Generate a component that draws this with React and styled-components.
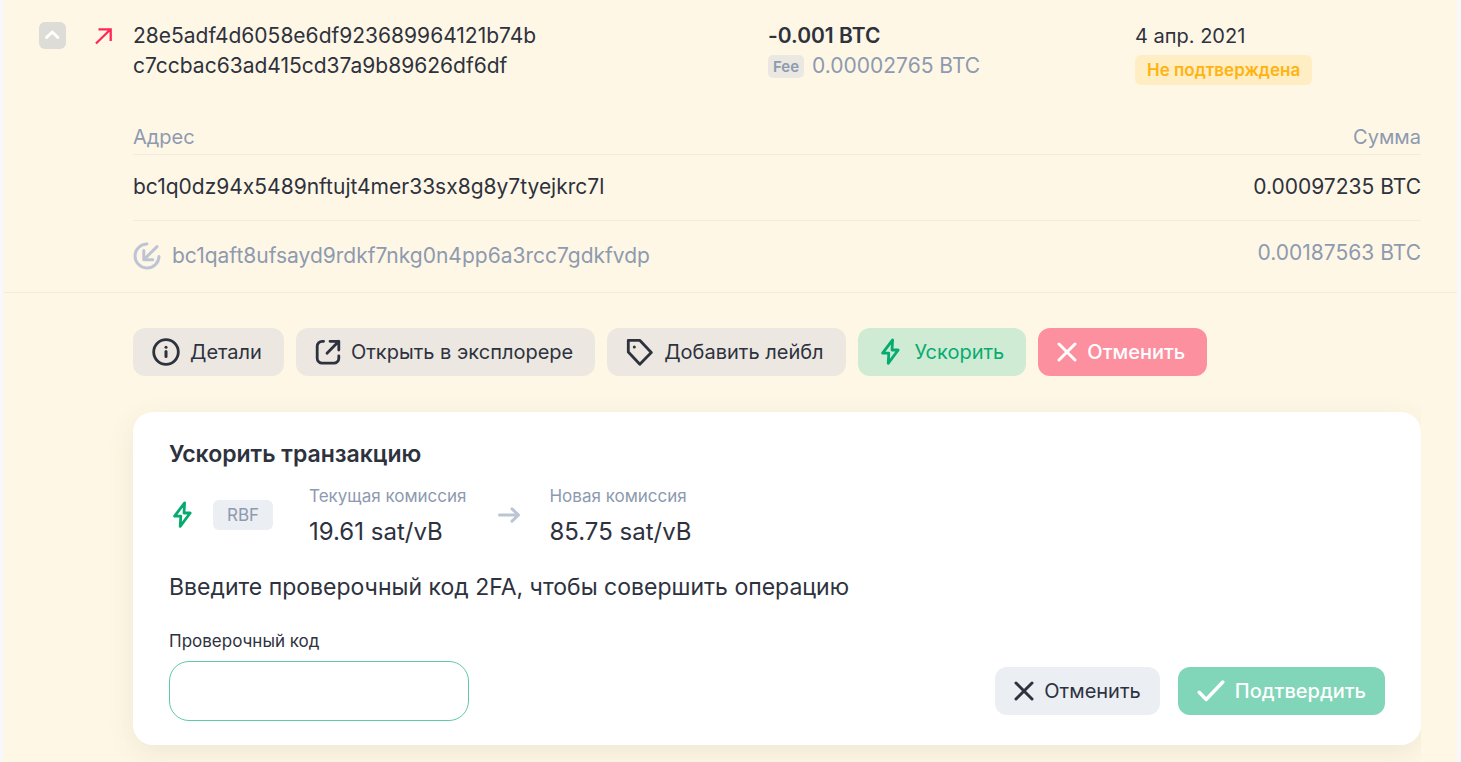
import React, { useState } from "react";
import styled, { createGlobalStyle, ThemeProvider } from "styled-components";

const theme = {
  colors: {
    page: "#f7f8fb",
    pending: "#fff7e5",
    text: "#2d323e",
    muted: "#8d9ab0",
    line: "#f1ece1",
    green: "#06ab71",
    red: "#ff2755",
    orange: "#ffb310",
  },
};

export default function App() {
  return (
    <ThemeProvider theme={theme}>
      <GlobalStyle />
      <Transaction>
        <TransactionInfo />
        <TransactionActions />
      </Transaction>
    </ThemeProvider>
  );
}

const TransactionInfo = () => {
  return (
    <Info>
      <Toggle type="button" aria-label="Свернуть">
        <svg width="27" height="27" viewBox="0 0 27 27">
          <path d="M7.5 15.5 13.2 10l5.7 5.5" />
        </svg>
      </Toggle>
      <Direction width="18" height="18" viewBox="0 0 18 18">
        <path d="M1 16.5 14.8 3M3.5 2.4h12.2V14" />
      </Direction>
      <Hash>
        28e5adf4d6058e6df923689964121b74b
        <br />
        c7ccbac63ad415cd37a9b89626df6df
      </Hash>
      <div>
        <Amount>-0.001 BTC</Amount>
        <Fee>
          <FeeTag>Fee</FeeTag>
          0.00002765 BTC
        </Fee>
      </div>
      <div>
        <div>4 апр. 2021</div>
        <Status>Не подтверждена</Status>
      </div>
      <Outputs>
        <thead>
          <tr>
            <th>Адрес</th>
            <th>Сумма</th>
          </tr>
        </thead>
        <tbody>
          <tr>
            <td>bc1q0dz94x5489nftujt4mer33sx8g8y7tyejkrc7l</td>
            <td>0.00097235 BTC</td>
          </tr>
          <ChangeRow>
            <td>
              <Address>
                <ChangeIcon />
                bc1qaft8ufsayd9rdkf7nkg0n4pp6a3rcc7gdkfvdp
              </Address>
            </td>
            <td>0.00187563 BTC</td>
          </ChangeRow>
        </tbody>
      </Outputs>
    </Info>
  );
};

const TransactionActions = () => {
  const [code, setCode] = useState("");

  return (
    <Actions>
      <ButtonRow>
        <Button type="button">
          <InfoIcon />
          Детали
        </Button>
        <Button type="button">
          <ExternalIcon />
          Открыть в эксплорере
        </Button>
        <Button type="button">
          <TagIcon />
          Добавить лейбл
        </Button>
        <Button type="button" $variant="boost">
          <BoltIcon />
          Ускорить
        </Button>
        <Button type="button" $variant="danger">
          <CrossIcon />
          Отменить
        </Button>
      </ButtonRow>

      <Card onSubmit={(e) => e.preventDefault()}>
        <Title>Ускорить транзакцию</Title>
        <FeeChange>
          <Method>
            <BoltIcon />
            <Rbf>RBF</Rbf>
          </Method>
          <Rate>
            <RateLabel>Текущая комиссия</RateLabel>
            <RateValue>19.61 sat/vB</RateValue>
          </Rate>
          <Arrow width="22" height="16" viewBox="0 0 22 16">
            <path d="M1.5 8h19M14 1.8 20.5 8 14 14.2" />
          </Arrow>
          <Rate>
            <RateLabel>Новая комиссия</RateLabel>
            <RateValue>85.75 sat/vB</RateValue>
          </Rate>
        </FeeChange>
        <Prompt>Введите проверочный код 2FA, чтобы совершить операцию</Prompt>
        <Footer>
          <Field>
            <Label htmlFor="code">Проверочный код</Label>
            <Input
              id="code"
              autoComplete="off"
              value={code}
              onChange={(e) => setCode(e.target.value)}
            />
          </Field>
          <FooterButtons>
            <Button type="button" $variant="plain">
              <CrossIcon />
              Отменить
            </Button>
            <Button type="submit" $variant="confirm">
              <CheckIcon />
              Подтвердить
            </Button>
          </FooterButtons>
        </Footer>
      </Card>
    </Actions>
  );
};

const InfoIcon = () => (
  <Icon width="28" height="28" viewBox="0 0 28 28">
    <circle cx="14" cy="14" r="12.3" />
    <path d="M14 13.4v5.2" strokeWidth="3" />
    <path d="M14 9.2v.1" strokeWidth="3" />
  </Icon>
);

const ExternalIcon = () => (
  <Icon width="26" height="28" viewBox="0 0 26 28">
    <path d="M8.6 3.3H7.2a5 5 0 0 0-5 5v11.9a5 5 0 0 0 5 5h11.6a5 5 0 0 0 5-5v-2.4" />
    <path d="M15 3.3h8.8v8.8M23.8 3.3 12 15.2" />
  </Icon>
);

const TagIcon = () => (
  <Icon width="28" height="28" viewBox="0 0 28 28">
    <path d="M2.3 2.3h11.4l11.6 12.2-11.5 11.7L2.3 14z" />
    <path d="M8.3 9v.1" strokeWidth="3" />
  </Icon>
);

const BoltIcon = () => (
  <Icon width="28" height="28" viewBox="0 0 28 28">
    <path d="M15.6 1.8 5.6 15.2h6.2l-.6 10.2 10-13.4H15z" />
  </Icon>
);

const CrossIcon = () => (
  <Icon width="20" height="20" viewBox="0 0 20 20">
    <path d="m2 2 16 16M18 2 2 18" strokeWidth="3" />
  </Icon>
);

const CheckIcon = () => (
  <Icon width="28" height="28" viewBox="0 0 28 28">
    <path d="m2.2 15.2 7 7.3L25.8 5" strokeWidth="3.4" />
  </Icon>
);

const ChangeIcon = () => (
  <Icon width="28" height="28" viewBox="0 0 28 28">
    <path d="M14 2A12 12 0 1 0 26 14.6" strokeWidth="3" />
    <path d="M24 4.6 11.5 17M10.8 8.5v9.2h9" strokeWidth="3" />
  </Icon>
);

const GlobalStyle = createGlobalStyle`
  * {
    box-sizing: border-box;
  }

  body {
    margin: 0;
    background-color: ${theme.colors.page};
    color: ${theme.colors.text};
    font-family: Inter, "Noto Sans", sans-serif;
    font-size: 20px;
    line-height: 30px;
    font-variant-ligatures: no-contextual;
  }
`;

const Transaction = styled.main`
  margin: 0 4px 0 3px;
  background-color: ${({ theme }) => theme.colors.pending};
`;

const Info = styled.section`
  display: grid;
  grid-template-columns: 56px 38px 635fr 367fr 286fr;
  padding: 21px 36px 0;
  border-bottom: 1px solid ${({ theme }) => theme.colors.line};
`;

const Toggle = styled.button`
  width: 27px;
  height: 27px;
  margin-top: 1px;
  padding: 0;
  border: 0;
  border-radius: 6px;
  background-color: #dddcd7;
  cursor: pointer;

  svg {
    display: block;
    fill: none;
    stroke: #fff;
    stroke-width: 3;
    stroke-linecap: round;
    stroke-linejoin: round;
  }
`;

const Direction = styled.svg`
  margin-top: 6px;
  fill: none;
  stroke: ${({ theme }) => theme.colors.red};
  stroke-width: 2.3;
`;

const Hash = styled.div`
  font-size: 21px;
  overflow-wrap: anywhere;
`;

const Amount = styled.div`
  font-size: 21px;
  font-weight: 600;
`;

const Fee = styled.div`
  display: flex;
  align-items: center;
  gap: 8px;
  color: ${({ theme }) => theme.colors.muted};
  font-size: 21px;
`;

const FeeTag = styled.span`
  padding: 0 5px;
  border-radius: 5px;
  background-color: #ebe8e1;
  font-size: 15px;
  font-weight: 600;
  line-height: 23px;
`;

const Status = styled.span`
  display: inline-block;
  margin-top: 4px;
  padding: 0 12px;
  border-radius: 6px;
  background-color: #ffedc3;
  color: ${({ theme }) => theme.colors.orange};
  font-size: 17px;
  font-weight: 600;
  vertical-align: top;
`;

const Outputs = styled.table`
  grid-column: 3 / -1;
  margin-top: 37px;
  border-collapse: separate;
  border-spacing: 0;

  th {
    padding: 0 0 2px;
    border-bottom: 1px solid ${({ theme }) => theme.colors.line};
    color: ${({ theme }) => theme.colors.muted};
    font-weight: 400;
    text-align: left;
  }

  td {
    padding: 17px 0 18px;
    border-bottom: 1px solid ${({ theme }) => theme.colors.line};
    font-size: 21px;
    vertical-align: top;
  }

  th:last-child,
  td:last-child {
    text-align: right;
  }

  tr:last-child td {
    border-bottom: 0;
  }
`;

const ChangeRow = styled.tr`
  color: ${({ theme }) => theme.colors.muted};
`;

const Address = styled.div`
  display: flex;
  align-items: center;
  gap: 11px;
  height: 36px;

  svg {
    color: #bdc5d4;
  }
`;

const Actions = styled.section`
  padding: 35px 36px 36px 130px;
`;

const variants = {
  neutral: { background: "#ece8e1", color: "#2d323e" },
  boost: { background: "#cfebd3", color: "#06ab71" },
  danger: { background: "#fd909f", color: "#fff", weight: 500 },
  plain: { background: "#ebeef3", color: "#2d323e" },
  confirm: { background: "#81d5b8", color: "#fff", weight: 500 },
};

const Button = styled.button`
  display: flex;
  align-items: center;
  gap: 10px;
  height: 48px;
  padding: 0 19px;
  border: 0;
  border-radius: 12px;
  background-color: ${({ $variant = "neutral" }) => variants[$variant].background};
  color: ${({ $variant = "neutral" }) => variants[$variant].color};
  font-family: inherit;
  font-size: 20px;
  font-variant-ligatures: inherit;
  font-weight: ${({ $variant = "neutral" }) => variants[$variant].weight || 400};
  white-space: nowrap;
  cursor: pointer;
`;

const ButtonRow = styled.div`
  display: flex;
  flex-wrap: wrap;
  gap: 12px;

  ${Button} {
    padding-right: 22px;
  }
`;

const Icon = styled.svg`
  flex: none;
  fill: none;
  stroke: currentColor;
  stroke-width: 2.8;
  stroke-linecap: round;
  stroke-linejoin: round;
`;

const Card = styled.form`
  margin-top: 36px;
  padding: 28px 36px 24px;
  border-radius: 20px;
  background-color: #fff;
  box-shadow: 0 8px 28px rgba(60, 80, 60, 0.09);
  clip-path: inset(-40px 0 -60px -40px);
`;

const Title = styled.h2`
  margin: 0;
  font-size: 23px;
  font-weight: 600;
  line-height: 28px;
`;

const FeeChange = styled.div`
  display: flex;
  align-items: center;
  margin-top: 18px;
`;

const Method = styled.div`
  display: flex;
  align-items: center;
  gap: 16px;
  margin-right: 36px;
  color: ${({ theme }) => theme.colors.green};
`;

const Rbf = styled.span`
  width: 60px;
  border-radius: 6px;
  background-color: #ebeef3;
  color: ${({ theme }) => theme.colors.muted};
  font-size: 17px;
  text-align: center;
`;

const Rate = styled.div`
  display: grid;
  gap: 14px;
`;

const RateLabel = styled.div`
  color: ${({ theme }) => theme.colors.muted};
  font-size: 17px;
  line-height: 20px;
`;

const RateValue = styled.div`
  font-size: 24px;
  line-height: 24px;
`;

const Arrow = styled.svg`
  margin: 0 29px 0 32px;
  fill: none;
  stroke: #bdc5d4;
  stroke-width: 3;
  stroke-linecap: round;
  stroke-linejoin: round;
`;

const Prompt = styled.p`
  margin: 28px 0 27px;
  font-size: 23px;
`;

const Footer = styled.div`
  display: flex;
  flex-wrap: wrap;
  align-items: flex-end;
  justify-content: space-between;
  gap: 18px;
`;

const Field = styled.div`
  display: grid;
  gap: 8px;
`;

const Label = styled.label`
  font-size: 17px;
  line-height: 24px;
`;

const Input = styled.input`
  width: 300px;
  height: 60px;
  padding: 0 18px;
  border: 1px solid #5fc9a5;
  border-radius: 20px;
  outline: 0;
  background-color: #fff;
  color: inherit;
  font-family: inherit;
  font-size: 20px;
`;

const FooterButtons = styled.div`
  display: flex;
  gap: 18px;
  padding-bottom: 6px;
`;
